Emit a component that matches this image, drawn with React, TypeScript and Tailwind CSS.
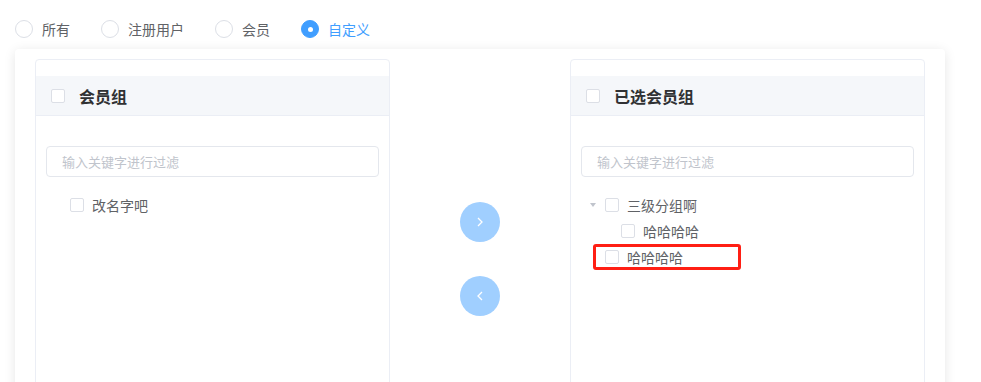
import React from "react";

const font = { fontFamily: '"Noto Sans CJK SC", "Noto Sans", sans-serif' };

function Radio({ label, checked }: { label: string; checked?: boolean }) {
  return (
    <div className="flex items-center mr-[31px]">
      {checked ? (
        <span className="w-[18px] h-[18px] rounded-full bg-[#409eff] border border-[#409eff] flex items-center justify-center">
          <span className="w-[5px] h-[5px] rounded-full bg-white" />
        </span>
      ) : (
        <span className="w-[18px] h-[18px] rounded-full border border-[#dcdfe6] bg-white" />
      )}
      <span className={`ml-[9px] text-[14px] leading-4 ${checked ? "text-[#409eff]" : "text-[#606266]"}`}>{label}</span>
    </div>
  );
}

function Box() {
  return <span className="w-[14px] h-[14px] shrink-0 rounded-[2px] border border-[#dcdfe6] bg-white" />;
}

function Row({ label, indent = 0, caret, boxed }: { label: string; indent?: number; caret?: boolean; boxed?: boolean }) {
  return (
    <div className="relative flex items-center h-[26px]" style={{ paddingLeft: indent }}>
      <span className="w-6 h-[26px] flex items-center justify-center shrink-0">
        {caret && (
          <svg width="8" height="6" viewBox="0 0 8 6">
            <path d="M1 1 L7 1 L4 5 Z" fill="#c0c4cc" />
          </svg>
        )}
      </span>
      <Box />
      <span className="ml-2 text-[14px] text-[#606266]">{label}</span>
      {boxed && (
        <div className="absolute left-[12px] top-[0px] w-[148px] h-[26px] border-[3px] border-[#ff1f14] rounded-[3px]" />
      )}
    </div>
  );
}

function Panel({ title, children }: { title: string; children: React.ReactNode }) {
  return (
    <div className="w-[355px] h-[400px] border border-[#ebeef5] rounded-[4px] bg-white shrink-0">
      <div className="h-4" />
      <div className="h-10 bg-[#f5f7fa] border-b border-[#ebeef5] flex items-center pl-[15px]">
        <Box />
        <span className="ml-[14px] text-[16px] font-bold text-[#303133]">{title}</span>
      </div>
      <div className="px-[10px] pt-[30px]">
        <div className="h-[31px] border border-[#e4e7ed] rounded-[4px] flex items-center pl-[15px] text-[13px] text-[#c0c4cc]">
          输入关键字进行过滤
        </div>
        <div className="pt-[15px]">{children}</div>
      </div>
    </div>
  );
}

function Chevron({ dir }: { dir: "r" | "l" }) {
  return (
    <svg width="10" height="12" viewBox="0 0 10 12">
      <polyline
        points={dir === "r" ? "3,2 7,6 3,10" : "7,2 3,6 7,10"}
        fill="none"
        stroke="white"
        strokeWidth="1.3"
      />
    </svg>
  );
}

export default function App() {
  return (
    <div className="w-[981px] h-[382px] overflow-hidden bg-white" style={font}>
      <div className="flex items-center pl-[15px] pt-[20px] h-[38px]">
        <Radio label="所有" />
        <Radio label="注册用户" />
        <Radio label="会员" />
        <Radio label="自定义" checked />
      </div>
      <div className="ml-[15px] mt-[11px] w-[930px] h-[420px] bg-white rounded-[4px] shadow-[0_2px_12px_0_rgba(0,0,0,0.1)] pt-[10px] px-[20px] flex">
        <Panel title="会员组">
          <Row label="改名字吧" />
        </Panel>
        <div className="w-[180px] flex flex-col items-center pt-[143px] gap-[34px]">
          <div className="w-10 h-10 rounded-full bg-[#a0cfff] flex items-center justify-center">
            <Chevron dir="r" />
          </div>
          <div className="w-10 h-10 rounded-full bg-[#a0cfff] flex items-center justify-center">
            <Chevron dir="l" />
          </div>
        </div>
        <Panel title="已选会员组">
          <Row label="三级分组啊" caret />
          <Row label="哈哈哈哈" indent={16} />
          <Row label="哈哈哈哈" boxed />
        </Panel>
      </div>
    </div>
  );
}
